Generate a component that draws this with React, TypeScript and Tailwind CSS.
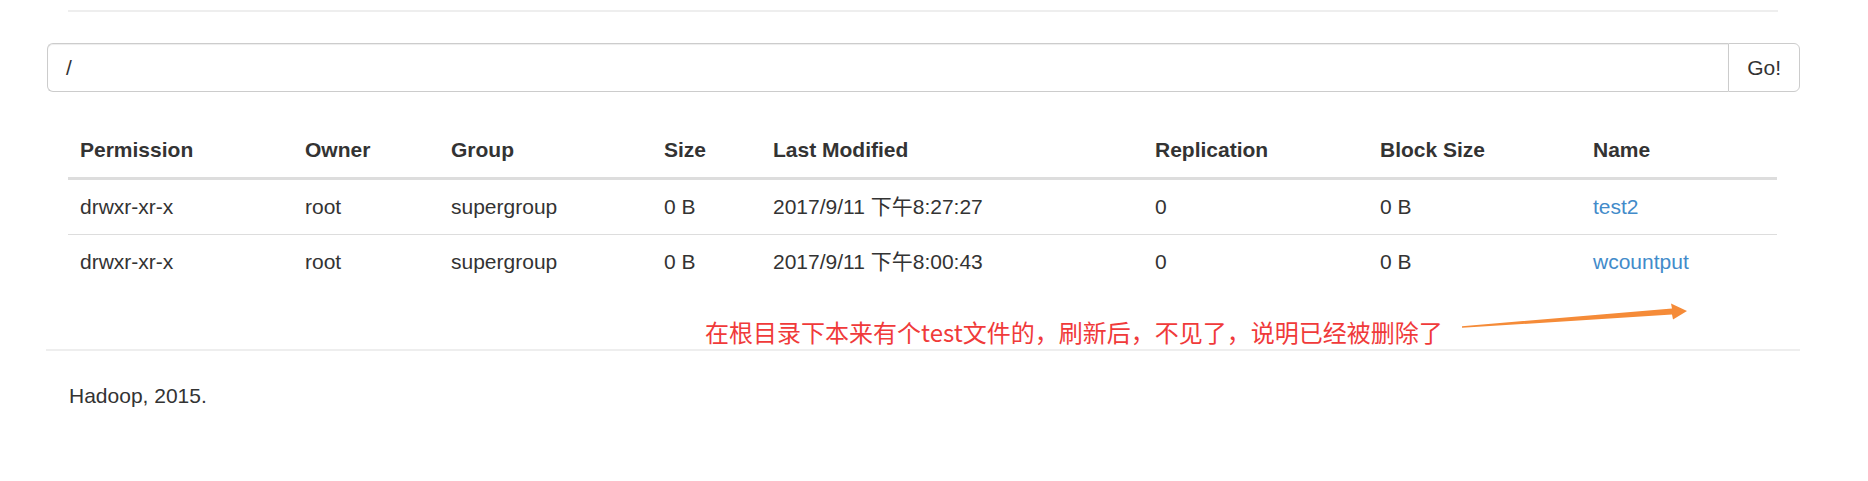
const columns = [
  { label: "Permission", width: "w-[225px]" },
  { label: "Owner", width: "w-[146px]" },
  { label: "Group", width: "w-[213px]" },
  { label: "Size", width: "w-[109px]" },
  { label: "Last Modified", width: "w-[382px]" },
  { label: "Replication", width: "w-[225px]" },
  { label: "Block Size", width: "w-[213px]" },
  { label: "Name", width: "w-[196px]" },
]

const rows = [
  {
    permission: "drwxr-xr-x",
    owner: "root",
    group: "supergroup",
    size: "0 B",
    modified: "2017/9/11 下午8:27:27",
    replication: "0",
    blockSize: "0 B",
    name: "test2",
  },
  {
    permission: "drwxr-xr-x",
    owner: "root",
    group: "supergroup",
    size: "0 B",
    modified: "2017/9/11 下午8:00:43",
    replication: "0",
    blockSize: "0 B",
    name: "wcountput",
  },
]

// orange hand-drawn style arrow from the screenshot annotation
function AnnotationArrow() {
  return (
    <svg
      className="absolute left-[1455px] top-[298px]"
      width="240"
      height="36"
      viewBox="0 0 240 36"
      aria-hidden
    >
      <polygon
        points="7,28.2 217,10.6 216,5.5 232,13 218,21.5 217,16.6 7,29.8"
        fill="#f58b38"
      />
    </svg>
  )
}

export default function App() {
  return (
    <div className="relative min-h-[481px] bg-white font-['Liberation_Sans','Noto_Sans_CJK_SC',sans-serif] text-[21px] leading-[30px] text-[#333]">
      <div className="ml-[46px] w-[1754px]">
        {/* page header rule */}
        <div className="mx-[22px] h-[12px] border-b-2 border-[#eeeeee]" />

        {/* path input */}
        <div className="ml-[1px] mt-[31px] flex h-[49px]">
          <div className="flex flex-1 items-center rounded-l-[6px] border border-r-0 border-[#cccccc] px-[18px] shadow-[inset_0_1px_1px_rgba(0,0,0,0.075)]">
            /
          </div>
          <button
            type="button"
            className="flex items-center rounded-r-[6px] border border-[#cccccc] bg-white px-[18px] text-[#333]"
          >
            Go!
          </button>
        </div>

        {/* directory listing */}
        <table className="mx-[22px] mt-[31px] w-[1709px] table-fixed border-collapse text-left">
          <thead>
            <tr>
              {columns.map((c) => (
                <th
                  key={c.label}
                  className={`${c.width} border-b-[3px] border-[#dddddd] p-[12px] align-bottom font-bold`}
                >
                  {c.label}
                </th>
              ))}
            </tr>
          </thead>
          <tbody>
            {rows.map((r, i) => {
              const cell = `p-[12px] whitespace-nowrap ${i > 0 ? "border-t border-[#dddddd]" : ""}`
              return (
                <tr key={r.name}>
                  <td className={cell}>{r.permission}</td>
                  <td className={cell}>{r.owner}</td>
                  <td className={cell}>{r.group}</td>
                  <td className={cell}>{r.size}</td>
                  <td className={cell}>{r.modified}</td>
                  <td className={cell}>{r.replication}</td>
                  <td className={cell}>{r.blockSize}</td>
                  <td className={cell}>
                    <a href="#" className="text-[#428bca]">
                      {r.name}
                    </a>
                  </td>
                </tr>
              )
            })}
          </tbody>
        </table>

        <div className="mt-[60px] border-t-2 border-[#eeeeee]" />

        <p className="mx-[23px] mt-[30px]">Hadoop, 2015.</p>
      </div>

      {/* annotation overlay */}
      <div className="absolute left-[705px] top-[320px] whitespace-nowrap font-['Noto_Sans_CJK_SC',sans-serif] text-[24px] leading-[24px] text-[#f03a3a]">
        在根目录下本来有个test文件的，刷新后，不见了，说明已经被删除了
      </div>
      <AnnotationArrow />
    </div>
  )
}
